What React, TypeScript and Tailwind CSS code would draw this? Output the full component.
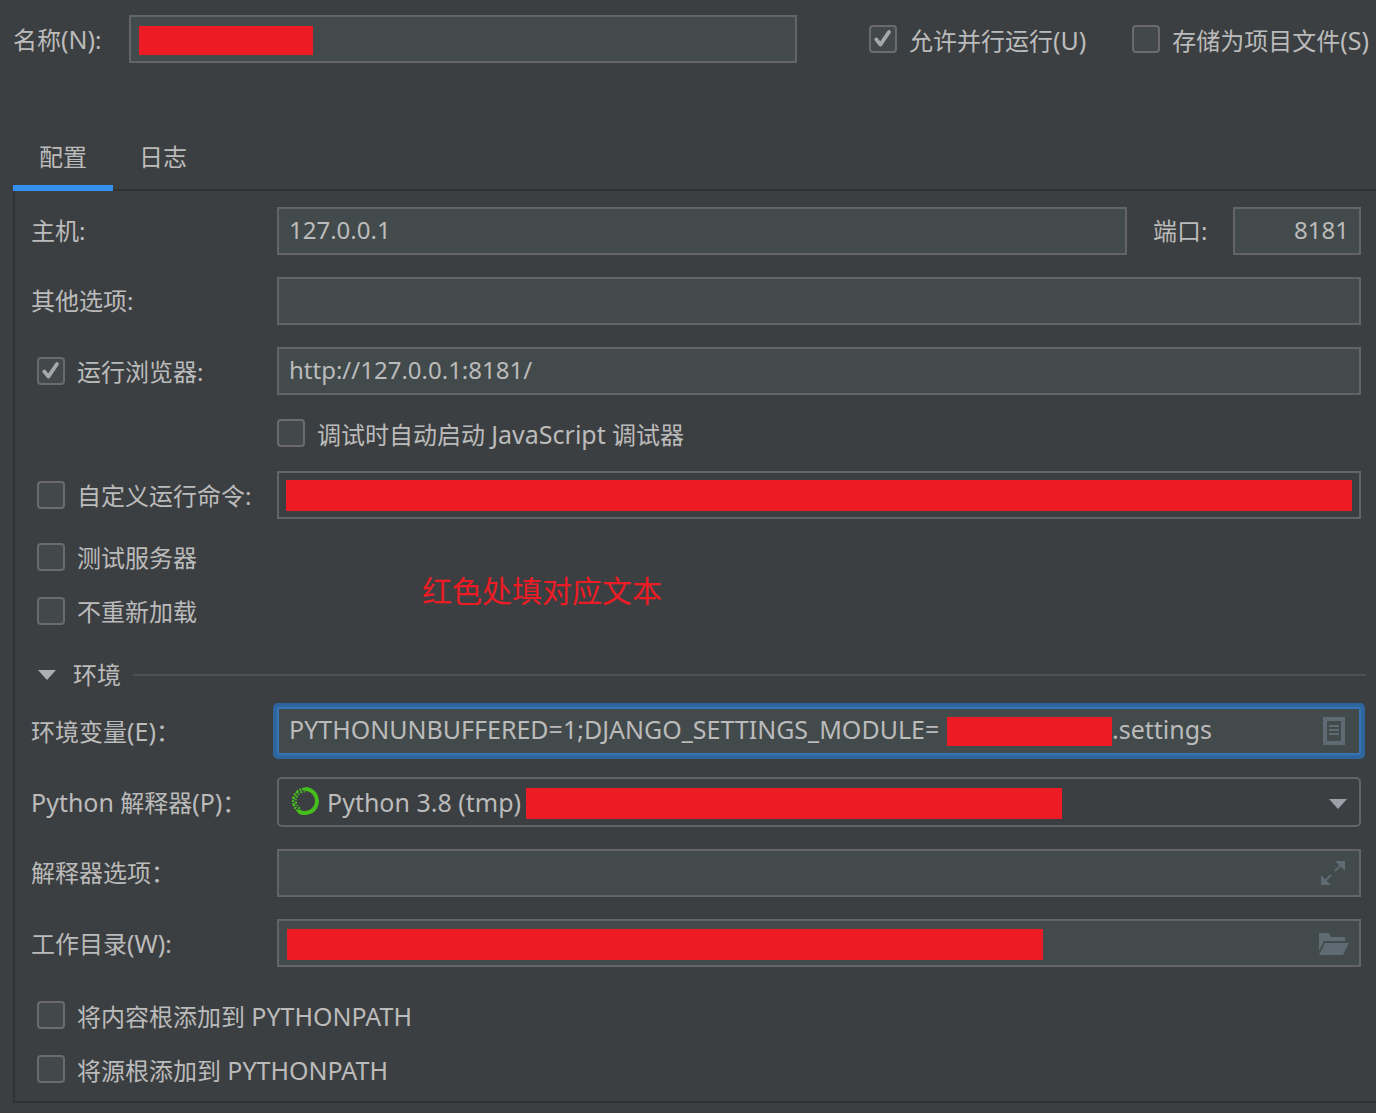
// src/App.tsx
import React, { useState } from 'react';

const fieldClass =
  'block h-12 w-full border-2 border-[#646464] bg-[#434a4b] px-[10px] pb-1 text-[24px] text-[#bbbbbb] outline-none';

// Latin runs are set slightly larger than the Chinese text around them
const Mixed: React.FC<{ text: string }> = ({ text }) => (
  <>
    {text.split(/([A-Za-z()]+)/).map((part, i) =>
      i % 2 === 1 ? (
        <span key={i} className="text-[25px] leading-8">
          {part}
        </span>
      ) : (
        part
      ),
    )}
  </>
);

interface CheckProps {
  label: string;
  initial?: boolean;
}

const Check: React.FC<CheckProps> = ({ label, initial = false }) => {
  const [checked, setChecked] = useState(initial);
  return (
    <label className="flex h-8 items-center gap-3 whitespace-nowrap">
      <span className="relative block h-7 w-7 shrink-0">
        <input
          type="checkbox"
          checked={checked}
          onChange={(e) => setChecked(e.target.checked)}
          className="block h-7 w-7 appearance-none rounded-[4px] border-2 border-[#6b6b6b] bg-[#43494a]"
        />
        {checked && (
          <svg viewBox="0 0 28 28" className="pointer-events-none absolute inset-0 h-7 w-7" fill="none" stroke="#a7a7a7" strokeWidth="3.8">
            <path d="M7.2 14.4 11.4 19.6 20 7" strokeLinejoin="round" strokeLinecap="round" />
          </svg>
        )}
      </span>
      <span className="pt-[2px]">
        <Mixed text={label} />
      </span>
    </label>
  );
};

interface RowProps {
  label: string;
  htmlFor: string;
  children: React.ReactNode;
}

const Row: React.FC<RowProps> = ({ label, htmlFor, children }) => (
  <div className="flex items-center">
    <label htmlFor={htmlFor} className="w-[246px] shrink-0 whitespace-nowrap">
      <Mixed text={label} />
    </label>
    <div className="relative min-w-0 flex-1">{children}</div>
  </div>
);

const CondaIcon: React.FC = () => (
  <svg viewBox="0 0 28 28" className="pointer-events-none absolute top-[10px] left-[14px] h-7 w-7" fill="none" stroke="#45bf1c">
    <path d="M14 2A12 12 0 1 1 7.6 24.2" strokeWidth="4" />
    <path d="M8 24.4A12.2 12.2 0 0 1 14 1.8" strokeWidth="2.6" strokeDasharray="3 1.2 1.8 1" />
    <path d="M9 21.6A9.4 9.4 0 0 1 14 4.4" strokeWidth="2" strokeDasharray="2 1.4 1.2 1.6" />
  </svg>
);

const App: React.FC = () => {
  const [tab, setTab] = useState('配置');
  const [open, setOpen] = useState(true);

  return (
    <div className="min-h-screen bg-[#3c3f41] pb-[10px] pl-[13px] font-['Noto_Sans','Noto_Sans_CJK_SC',sans-serif] text-[24px] leading-8 text-[#bbbbbb]">
      {/* Name and run flags */}
      <div className="flex items-center pt-[15px] pr-[7px]">
        <label htmlFor="name" className="w-[116px] shrink-0 whitespace-nowrap">
          <Mixed text="名称(N):" />
        </label>
        <div className="relative min-w-0 flex-1">
          <input id="name" className={fieldClass} />
          <span className="absolute top-[11px] left-[10px] h-[29px] w-[174px] bg-[#ed1c24]" />
        </div>
        <div className="ml-[72px] flex gap-[46px]">
          <Check label="允许并行运行(U)" initial />
          <Check label="存储为项目文件(S)" />
        </div>
      </div>

      {/* Tabs */}
      <div className="mt-[66px] flex" role="tablist">
        {['配置', '日志'].map((name) => (
          <button
            key={name}
            type="button"
            role="tab"
            aria-selected={tab === name}
            onClick={() => setTab(name)}
            className={
              tab === name
                ? 'relative z-10 -mb-[2px] h-[62px] w-[100px] border-b-[6px] border-[#358fed]'
                : 'h-[60px] w-[100px] border-b-4 border-transparent'
            }
          >
            {name}
          </button>
        ))}
      </div>

      <div className="border-y-2 border-l-2 border-[#323232] py-4 pr-[15px] pl-4">
        <div className="flex flex-col gap-[22px]">
          <Row label="主机:" htmlFor="host">
            <div className="flex items-center">
              <input id="host" defaultValue="127.0.0.1" className={`${fieldClass} min-w-0 flex-1`} />
              <label htmlFor="port" className="ml-[26px] w-20 shrink-0">
                端口:
              </label>
              <div className="w-32 shrink-0">
                <input id="port" defaultValue="8181" className={`${fieldClass} text-right`} />
              </div>
            </div>
          </Row>

          <Row label="其他选项:" htmlFor="options">
            <input id="options" className={fieldClass} />
          </Row>

          <div className="flex items-center">
            <div className="w-[246px] shrink-0 pl-[6px]">
              <Check label="运行浏览器:" initial />
            </div>
            <input aria-label="运行浏览器" defaultValue="http://127.0.0.1:8181/" className={`${fieldClass} min-w-0 flex-1`} />
          </div>

          <div className="pl-[246px]">
            <Check label="调试时自动启动 JavaScript 调试器" />
          </div>

          <div className="flex items-center">
            <div className="w-[246px] shrink-0 pl-[6px]">
              <Check label="自定义运行命令:" />
            </div>
            <div className="relative min-w-0 flex-1">
              <input
                aria-label="自定义运行命令"
                className="block h-12 w-full border-2 border-[#646464] bg-transparent px-[10px] outline-none"
              />
              <span className="absolute inset-x-[9px] top-[9px] h-[31px] bg-[#ed1c24]" />
            </div>
          </div>

          <div className="flex items-end">
            <div className="flex w-[391px] flex-col gap-[22px] pl-[6px]">
              <Check label="测试服务器" />
              <Check label="不重新加载" />
            </div>
            <p className="pb-4 text-[30px] leading-10 text-[#ed1c24]">红色处填对应文本</p>
          </div>
        </div>

        {/* Environment */}
        <button
          type="button"
          aria-expanded={open}
          onClick={() => setOpen(!open)}
          className="mt-[30px] mb-[14px] -mr-[5px] flex h-9 w-[calc(100%+5px)] items-center pl-[7px]"
        >
          <svg viewBox="0 0 18 10" className="h-[10px] w-[18px]" fill="#adb0b2">
            <path d="M0 0h18L9 10z" />
          </svg>
          <span className="ml-[17px]">环境</span>
          <span className="ml-3 h-[2px] flex-1 bg-[#515151]" />
        </button>

        {open && (
          <div className="flex flex-col gap-[22px]">
            <Row label="环境变量(E)：" htmlFor="env">
              <div className="flex h-12 items-center rounded-[1px] border-2 border-[#3675b3] bg-[#434a4b] pl-[10px] text-[25px] outline-4 outline-[#2f659f]">
                <input
                  id="env"
                  defaultValue="PYTHONUNBUFFERED=1;DJANGO_SETTINGS_MODULE="
                  className="field-sizing-content min-w-[658px] bg-transparent pb-1 outline-none"
                />
                <span className="h-[29px] w-[165px] shrink-0 bg-[#ed1c24]" />
                <input aria-label="环境变量" defaultValue=".settings" className="min-w-0 flex-1 bg-transparent pb-1 outline-none" />
                <button type="button" aria-label="编辑" className="mr-[14px] shrink-0">
                  <svg viewBox="0 0 22 28" className="block h-7 w-[22px]" fill="#5f6b72">
                    <path fillRule="evenodd" d="M0 0h22v28H0zM4 4v20h14V4z" />
                    <path d="M6 8h10v2H6zM6 12h10v2H6zM6 16h10v2H6z" />
                  </svg>
                </button>
              </div>
            </Row>

            <Row label="Python 解释器(P)：" htmlFor="interpreter">
              <select
                id="interpreter"
                className="block h-[50px] w-full appearance-none rounded-[5px] border-2 border-[#646464] bg-[#3c3f41] pl-12 text-[25px] outline-none"
              >
                <option>Python 3.8 (tmp)</option>
              </select>
              <CondaIcon />
              <span className="absolute top-[11px] left-[249px] h-[31px] w-[536px] bg-[#ed1c24]" />
              <svg viewBox="0 0 18 10" className="pointer-events-none absolute top-[22px] right-[14px] h-[10px] w-[18px]" fill="#9da0a8">
                <path d="M0 0h18L9 10z" />
              </svg>
            </Row>

            <Row label="解释器选项：" htmlFor="interpreter-options">
              <input id="interpreter-options" className={fieldClass} />
              <button type="button" aria-label="展开" className="absolute top-3 right-4">
                <svg viewBox="0 0 24 24" className="h-6 w-6" fill="#5f6b72">
                  <path d="M14 0h10v10zM0 14v10h10z" />
                  <path d="M14 10 21 3M10 14 3 21" stroke="#5f6b72" strokeWidth="2" />
                </svg>
              </button>
            </Row>

            <Row label="工作目录(W):" htmlFor="workdir">
              <input id="workdir" className={fieldClass} />
              <span className="absolute top-[10px] left-[10px] h-[31px] w-[756px] bg-[#ed1c24]" />
              <button type="button" aria-label="浏览" className="absolute top-[14px] right-3">
                <svg viewBox="0 0 30 22" className="h-[22px] w-[30px]" fill="#5f6b72">
                  <path d="M0 0h10l2 4h14v4H5L0 18z" />
                  <path d="M6 10h24l-6 12H0z" />
                </svg>
              </button>
            </Row>

            <div className="flex flex-col gap-[22px] pt-[10px] pl-[6px]">
              <Check label="将内容根添加到 PYTHONPATH" />
              <Check label="将源根添加到 PYTHONPATH" />
            </div>
          </div>
        )}
      </div>
    </div>
  );
};

export default App;
